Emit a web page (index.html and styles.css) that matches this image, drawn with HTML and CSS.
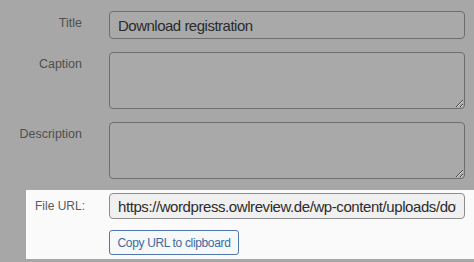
FILE: index.html
```html
<!DOCTYPE html>
<html lang="en">
<head>
    <meta charset="UTF-8">
    <meta name="viewport" content="width=device-width, initial-scale=1.0">
    <title>Attachment details</title>
    <link rel="stylesheet" href="styles.css">
</head>
<body>
    <div class="details">
        <div class="setting">
            <label class="name" for="title">Title</label>
            <input type="text" id="title" class="field" value="Download registration">
        </div>

        <div class="setting">
            <label class="name" for="caption">Caption</label>
            <textarea id="caption" class="field area"></textarea>
        </div>

        <div class="setting">
            <label class="name" for="description">Description</label>
            <textarea id="description" class="field area"></textarea>
        </div>

        <div class="file-url">
            <label class="url-name" for="url">File URL:</label>
            <input type="text" id="url" class="field url-field" value="https://wordpress.owlreview.de/wp-content/uploads/download-registration.pdf" readonly>
            <div></div>
            <button class="copy">Copy URL to clipboard</button>
        </div>
    </div>
</body>
</html>
```

FILE: styles.css
```css
body {
    font-family: "Liberation Sans", Arial, sans-serif;
    margin: 0;
    background-color: #a7a7a7;
    height: 262px;
    overflow: hidden;
}

.details {
    padding-top: 11px;
}

.setting {
    display: grid;
    grid-template-columns: 82px 1fr;
    column-gap: 27px;
    padding-right: 9px;
    margin-bottom: 13px;
}

.name {
    text-align: right;
    font-size: 12.5px;
    color: #4f4f4f;
    padding-top: 5px;
}

.field {
    box-sizing: border-box;
    width: 100%;
    margin: 0;
    height: 28px;
    padding: 0 8px;
    font-family: inherit;
    font-size: 15px;
    letter-spacing: -0.5px;
    color: #2b2b2b;
    background: #a9a9a9;
    border: 1px solid #6e6e6e;
    border-radius: 4px;
    outline: none;
}

.area {
    height: 57px;
    display: block;
    resize: vertical;
}

.file-url {
    display: grid;
    grid-template-columns: 74px 1fr;
    row-gap: 11px;
    align-items: center;
    margin-left: 26px;
    margin-top: -2px;
    padding: 3px 9px 4px 9px;
    background: #fafafa;
}

.url-name {
    font-size: 12px;
    color: #5a5a5a;
}

.url-field {
    height: 26px;
    letter-spacing: -0.42px;
    background: #f0f0f0;
    border-color: #8d8d8d;
    color: #2c2c2c;
    text-overflow: clip;
}

.copy {
    justify-self: start;
    height: 25px;
    width: 130px;
    padding: 0;
    white-space: nowrap;
    font-family: inherit;
    font-size: 12px;
    letter-spacing: -0.35px;
    color: #3d6a9f;
    background: #f7f8f9;
    border: 1px solid #5077a8;
    border-radius: 3px;
}
```
